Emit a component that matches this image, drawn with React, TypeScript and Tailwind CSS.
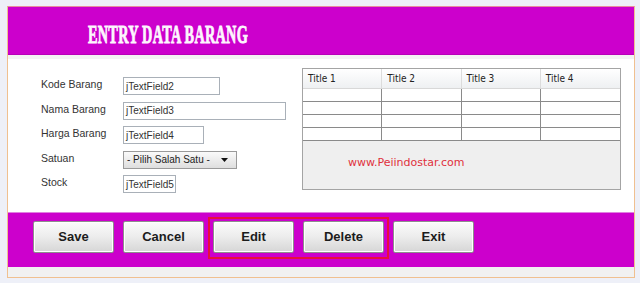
const labels = ['Kode Barang', 'Nama Barang', 'Harga Barang', 'Satuan', 'Stock']

function TextField({ text, width }: { text: string; width: string }) {
  return (
    <div
      className={`${width} h-[18px] border border-[#a9b0b8] bg-white px-[2px] flex items-center text-[10px] text-[#333] font-['Liberation_Sans',Arial,sans-serif]`}
    >
      {text}
    </div>
  )
}

function Button({ label }: { label: string }) {
  return (
    <div className="w-[81px] h-[32px] rounded-[2px] border border-[#8e8e8e] bg-gradient-to-b from-[#fbfbfb] via-[#ececec] to-[#d6d6d6] shadow-[inset_0_0_0_1px_#ffffff] flex items-center justify-center text-[13px] font-bold text-[#1c1c1c] font-['Liberation_Sans',Arial,sans-serif]">
      {label}
    </div>
  )
}

export default function App() {
  return (
    <div className="w-[640px] h-[283px] bg-[#eef0f8] overflow-hidden">
      <div className="ml-[7px] mt-[6px] w-[628px] h-[272px] border border-[#f0c090] border-t-[#e88aa0] flex flex-col bg-white">
        {/* Header */}
        <div className="h-[48px] bg-[#cc00cc] border-b border-[#b800b8] pl-[80px] pt-[15px]">
          <span className="inline-block origin-left scale-x-[0.57] text-[25px] leading-[25px] font-bold text-[#fdf6fd] tracking-[0.5px] [-webkit-text-stroke:0.9px_#fdf6fd] font-['Liberation_Serif',serif]">
            ENTRY DATA BARANG
          </span>
        </div>
        <div className="h-[4px] bg-[#f3f3f3]" />

        {/* Content */}
        <div className="h-[153px] flex">
          <div className="w-[294px] pl-[33px] pt-[18px] flex">
            <div className="w-[82px] flex flex-col gap-[6.5px] text-[10.5px] text-[#333] font-['Liberation_Sans',Arial,sans-serif]">
              {labels.map((l) => (
                <div key={l} className="h-[18px] leading-[14px]">
                  {l}
                </div>
              ))}
            </div>
            <div className="flex flex-col gap-[6.5px]">
              <TextField text="jTextField2" width="w-[97px]" />
              <TextField text="jTextField3" width="w-[163px]" />
              <TextField text="jTextField4" width="w-[81px]" />
              <div className="w-[114px] h-[18px] border border-[#9a9a9a] bg-gradient-to-b from-[#fafafa] to-[#dedede] pl-[3px] pr-[8px] flex items-center justify-between text-[10px] text-[#222] font-['Liberation_Sans',Arial,sans-serif]">
                <span>- Pilih Salah Satu -</span>
                <svg width="7" height="4" viewBox="0 0 7 4">
                  <path d="M0 0h7L3.5 4z" fill="#111" />
                </svg>
              </div>
              <TextField text="jTextField5" width="w-[53px]" />
            </div>
          </div>

          {/* Table */}
          <div className="mt-[9px] w-[319px] h-[122px] border border-[#a4a4a4] bg-[#efefef] flex flex-col">
            <div className="grid grid-cols-4 h-[20px] bg-gradient-to-b from-[#ffffff] to-[#eef0f2] border-b border-[#d8d8d8]">
              {['Title 1', 'Title 2', 'Title 3', 'Title 4'].map((t, i) => (
                <div
                  key={t}
                  className={`pl-[5px] flex items-center text-[10px] text-[#222] font-['DejaVu_Sans_Condensed','Liberation_Sans',sans-serif] ${i < 3 ? 'border-r border-[#dcdcdc]' : ''}`}
                >
                  {t}
                </div>
              ))}
            </div>
            {[0, 1, 2, 3].map((r) => (
              <div key={r} className="grid grid-cols-4 h-[13px] bg-white border-b border-[#8a8a8a]">
                {[0, 1, 2, 3].map((c) => (
                  <div key={c} className={`${c < 3 ? 'border-r border-[#8a8a8a]' : ''}`} />
                ))}
              </div>
            ))}
            <div className="flex-1 pl-[45px] pt-[14px] text-[11px] text-[#e0303c] font-['DejaVu_Sans',sans-serif]">
              www.Peiindostar.com
            </div>
          </div>
        </div>

        {/* Footer */}
        <div className="h-[55px] bg-[#cc00cc] border-t border-[#e080e0] pl-[25px] pt-[8px] flex items-start gap-[9px]">
          <Button label="Save" />
          <Button label="Cancel" />
          <div className="relative flex gap-[9px]">
            <span className="absolute -left-[5px] -right-[5px] -top-[4px] -bottom-[6px] border-2 border-[#e8103c]" />
            <Button label="Edit" />
            <Button label="Delete" />
          </div>
          <Button label="Exit" />
        </div>
        <div className="flex-1 bg-[#f1f1f1]" />
      </div>
    </div>
  )
}
